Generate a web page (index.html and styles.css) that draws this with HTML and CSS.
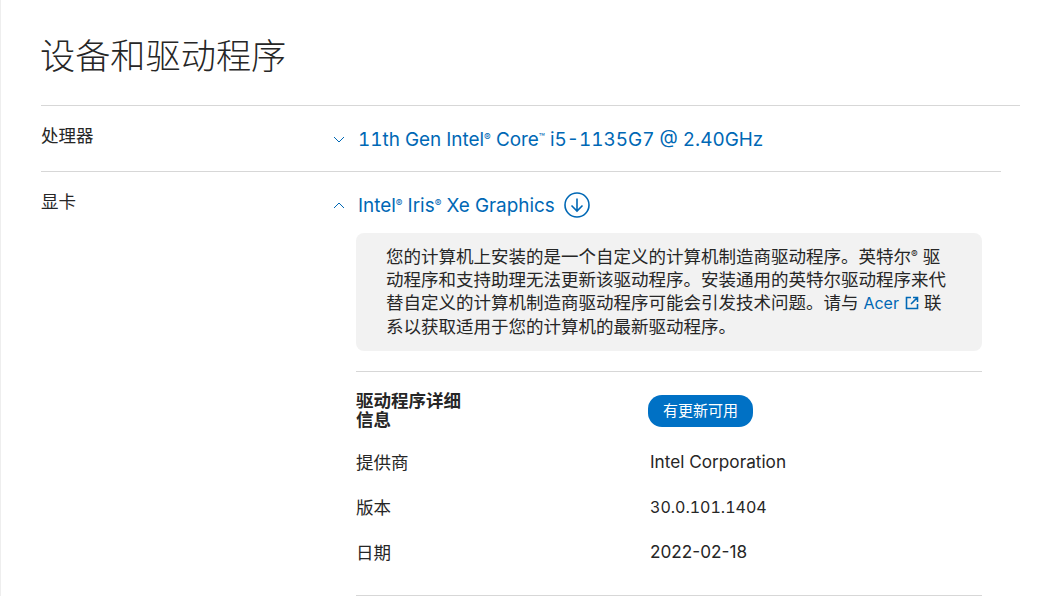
FILE: index.html
```html
<!DOCTYPE html>
<html lang="zh-CN">
<head>
  <meta charset="UTF-8">
  <meta name="viewport" content="width=device-width, initial-scale=1.0">
  <title>设备和驱动程序</title>
  <link rel="stylesheet" href="styles.css">
</head>
<body>
  <div class="page">
    <h1>设备和驱动程序</h1>

    <div class="row row-first">
      <div class="row-label">处理器</div>
      <div class="row-body">
        <div class="device">
          <svg class="chevron" viewBox="0 0 12 7"><path d="M1 1l5 5 5-5"/></svg>
          <span>11th Gen Intel<sup class="mark">®</sup> Core<sup class="mark">™</sup> i5-1135G7 @ 2.40GHz</span>
        </div>
      </div>
    </div>

    <div class="row">
      <div class="row-label">显卡</div>
      <div class="row-body">
        <div class="device">
          <svg class="chevron" viewBox="0 0 12 7"><path d="M1 6l5-5 5 5"/></svg>
          <span>Intel<sup class="mark">®</sup> Iris<sup class="mark">®</sup> Xe Graphics</span>
          <svg class="update-icon" viewBox="0 0 26 26"><circle cx="13" cy="13" r="12"/><path d="M13 6.5v12.5M7.5 13.5l5.5 5.5 5.5-5.5"/></svg>
        </div>
        <div class="notice">
          您的计算机上安装的是一个自定义的计算机制造商驱动程序。英特尔<sup class="mark">®</sup> 驱动程序和支持助理无法更新该驱动程序。安装通用的英特尔驱动程序来代替自定义的计算机制造商驱动程序可能会引发技术问题。请与 <a href="#">Acer<svg class="ext-icon" viewBox="0 0 14 14"><path d="M6 1.5H1.5v11h11V8M8 1.5h4.5V6M12.5 1.5L6 8"/></svg></a> 联系以获取适用于您的计算机的最新驱动程序。
        </div>
        <div class="details">
          <div class="details-head">
            <div class="details-title">驱动程序详细信息</div>
            <div class="pill">有更新可用</div>
          </div>
          <div class="details-row"><div class="details-key">提供商</div><div>Intel Corporation</div></div>
          <div class="details-row"><div class="details-key">版本</div><div class="version">30.0.101.1404</div></div>
          <div class="details-row"><div class="details-key">日期</div><div>2022-02-18</div></div>
        </div>
      </div>
    </div>
  </div>
</body>
</html>
```

FILE: styles.css
```css
body {
  margin: 0;
  height: 596px;
  overflow: hidden;
  background: #fff;
  color: #262626;
  font-family: Inter, "Noto Sans CJK SC", sans-serif;
  font-size: 17.5px;
  border-left: 1px solid #eee;
}
.page {
  padding-left: 40px;
  width: 979px;
}
h1 {
  margin: 0;
  padding-top: 32px;
  height: 106px;
  box-sizing: border-box;
  font-size: 35.2px;
  font-weight: 300;
  line-height: 48px;
  text-indent: -1px;
  border-bottom: 1px solid #d7d7d7;
}
.row {
  display: flex;
  width: 960px;
}
.row-first {
  height: 65px;
  border-bottom: 1px solid #d7d7d7;
}
.row-label {
  width: 292px;
  padding-top: 18px;
  line-height: 24px;
}
.row-body {
  flex: 1;
  padding-top: 20px;
}
.device {
  display: flex;
  align-items: center;
  height: 26px;
  color: #0068b5;
  font-size: 18.9px;
  font-variant-numeric: tabular-nums;
}
.mark {
  font-size: 10px;
  line-height: 0;
  vertical-align: 5px;
}
.chevron {
  width: 12px;
  height: 7px;
  margin-right: 13px;
  fill: none;
  stroke: #0068b5;
  stroke-width: 1;
}
.update-icon {
  width: 26px;
  height: 26px;
  margin-left: 9px;
  fill: none;
  stroke: #0068b5;
  stroke-width: 1.6;
}
.notice {
  margin: 15px 19px 0 23px;
  padding: 12px 30px 13px 30px;
  background: #f2f2f2;
  border-radius: 8px;
  line-height: 23px;
  height: 118px;
  box-sizing: border-box;
}
.notice a {
  color: #0068b5;
  text-decoration: none;
  font-size: 16px;
}
.ext-icon {
  width: 14px;
  height: 14px;
  margin-left: 6px;
  vertical-align: -1px;
  fill: none;
  stroke: #0068b5;
  stroke-width: 1.6;
}
.details {
  margin: 20px 19px 0 23px;
  border-top: 1px solid #d7d7d7;
  border-bottom: 1px solid #d7d7d7;
  height: 225px;
  box-sizing: border-box;
}
.details-head {
  display: flex;
  align-items: center;
  padding-top: 8px;
  height: 59px;
}
.details-title {
  width: 110px;
  margin-right: 182px;
  font-weight: 700;
  line-height: 19px;
}
.pill {
  margin-top: 2px;
  background: #0071c5;
  color: #fff;
  font-size: 15px;
  line-height: 32px;
  padding: 0 15px;
  border-radius: 14px;
}
.details-row {
  display: flex;
  height: 45px;
  align-items: center;
  font-size: 17.2px;
}
.details-key {
  width: 294px;
  font-size: 17.5px;
}
.version {
  font-size: 16px;
  font-variant-numeric: tabular-nums;
}
```
